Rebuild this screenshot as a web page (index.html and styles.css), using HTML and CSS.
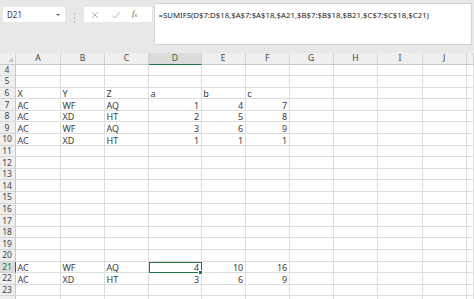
FILE: index.html
```html
<!DOCTYPE html>
<html>
<head>
<meta charset="utf-8">
<link rel="stylesheet" href="styles.css">
</head>
<body>
<div class="app">
  <div class="toolbar">
    <div class="namebox"><span class="name">D21</span><span class="caret"></span></div>
    <div class="sep"><i></i><i></i><i></i></div>
    <div class="fxbox">
      <svg class="ic" width="10" height="10" viewBox="0 0 10 10"><path d="M2 2 L8 8 M8 2 L2 8" stroke="#b4b4b4" stroke-width="1" fill="none"/></svg>
      <svg class="ic" width="10" height="10" viewBox="0 0 10 10"><path d="M1.5 5.5 L4 8 L8.5 2" stroke="#b4b4b4" stroke-width="1" fill="none"/></svg>
      <span class="fx">f<sub>x</sub></span>
    </div>
    <div class="formula">=SUMIFS(D$7:D$18,$A$7:$A$18,$A21,$B$7:$B$18,$B21,$C$7:$C$18,$C21)</div>
  </div>
  <div class="sheet">
    <div class="row head">
      <div class="corner"><span class="tri"></span></div><div>A</div><div>B</div><div>C</div><div class="hsel">D</div><div>E</div><div>F</div><div>G</div><div>H</div><div>I</div><div>J</div><div></div>
    </div>
    <div class="row"><div class="rh">4</div><div></div><div></div><div></div><div></div><div></div><div></div><div></div><div></div><div></div><div></div><div></div></div>
    <div class="row"><div class="rh">5</div><div></div><div></div><div></div><div></div><div></div><div></div><div></div><div></div><div></div><div></div><div></div></div>
    <div class="row"><div class="rh">6</div><div>X</div><div>Y</div><div>Z</div><div>a</div><div>b</div><div>c</div><div></div><div></div><div></div><div></div><div></div></div>
    <div class="row"><div class="rh">7</div><div>AC</div><div>WF</div><div>AQ</div><div class="n">1</div><div class="n">4</div><div class="n">7</div><div></div><div></div><div></div><div></div><div></div></div>
    <div class="row"><div class="rh">8</div><div>AC</div><div>XD</div><div>HT</div><div class="n">2</div><div class="n">5</div><div class="n">8</div><div></div><div></div><div></div><div></div><div></div></div>
    <div class="row"><div class="rh">9</div><div>AC</div><div>WF</div><div>AQ</div><div class="n">3</div><div class="n">6</div><div class="n">9</div><div></div><div></div><div></div><div></div><div></div></div>
    <div class="row"><div class="rh">10</div><div>AC</div><div>XD</div><div>HT</div><div class="n">1</div><div class="n">1</div><div class="n">1</div><div></div><div></div><div></div><div></div><div></div></div>
    <div class="row"><div class="rh">11</div><div></div><div></div><div></div><div></div><div></div><div></div><div></div><div></div><div></div><div></div><div></div></div>
    <div class="row"><div class="rh">12</div><div></div><div></div><div></div><div></div><div></div><div></div><div></div><div></div><div></div><div></div><div></div></div>
    <div class="row"><div class="rh">13</div><div></div><div></div><div></div><div></div><div></div><div></div><div></div><div></div><div></div><div></div><div></div></div>
    <div class="row"><div class="rh">14</div><div></div><div></div><div></div><div></div><div></div><div></div><div></div><div></div><div></div><div></div><div></div></div>
    <div class="row"><div class="rh">15</div><div></div><div></div><div></div><div></div><div></div><div></div><div></div><div></div><div></div><div></div><div></div></div>
    <div class="row"><div class="rh">16</div><div></div><div></div><div></div><div></div><div></div><div></div><div></div><div></div><div></div><div></div><div></div></div>
    <div class="row"><div class="rh">17</div><div></div><div></div><div></div><div></div><div></div><div></div><div></div><div></div><div></div><div></div><div></div></div>
    <div class="row"><div class="rh">18</div><div></div><div></div><div></div><div></div><div></div><div></div><div></div><div></div><div></div><div></div><div></div></div>
    <div class="row"><div class="rh">19</div><div></div><div></div><div></div><div></div><div></div><div></div><div></div><div></div><div></div><div></div><div></div></div>
    <div class="row"><div class="rh">20</div><div></div><div></div><div></div><div></div><div></div><div></div><div></div><div></div><div></div><div></div><div></div></div>
    <div class="row"><div class="rh rsel">21</div><div>AC</div><div>WF</div><div>AQ</div><div class="n sel">4</div><div class="n">10</div><div class="n">16</div><div></div><div></div><div></div><div></div><div></div></div>
    <div class="row"><div class="rh">22</div><div>AC</div><div>XD</div><div>HT</div><div class="n">3</div><div class="n">6</div><div class="n">9</div><div></div><div></div><div></div><div></div><div></div></div>
    <div class="row"><div class="rh">23</div><div></div><div></div><div></div><div></div><div></div><div></div><div></div><div></div><div></div><div></div><div></div></div>
    <div class="row"><div class="rh"></div><div></div><div></div><div></div><div></div><div></div><div></div><div></div><div></div><div></div><div></div><div></div></div>
  </div>
</div>
</body>
</html>
```

FILE: styles.css
```css
html, body {
  margin: 0;
  padding: 0;
  background: #ffffff;
  overflow: hidden;
}
.app {
  width: 474px;
  height: 299px;
  overflow: hidden;
  font-family: "Noto Sans", "Liberation Sans", sans-serif;
  color: #333333;
}
.toolbar {
  display: flex;
  align-items: flex-start;
  height: 53px;
  box-sizing: border-box;
  padding: 3px 2px 0 2.5px;
  background: #e8e8e8;
}
.namebox {
  position: relative;
  width: 62px;
  height: 15px;
  margin-top: 4px;
  background: #ffffff;
  display: flex;
  align-items: center;
  box-sizing: border-box;
  padding-left: 4.5px;
}
.name {
  font-size: 8px;
  color: #333;
}
.caret {
  position: absolute;
  right: 5px;
  top: 6.5px;
  width: 0;
  height: 0;
  border-left: 2px solid transparent;
  border-right: 2px solid transparent;
  border-top: 2px solid #666;
}
.sep {
  width: 19.5px;
  margin-top: 10px;
  display: flex;
  flex-direction: column;
  align-items: center;
  gap: 2.5px;
}
.sep i {
  display: block;
  width: 1px;
  height: 1.5px;
  background: #bdbdbd;
}
.fxbox {
  width: 68px;
  height: 15px;
  margin-top: 4px;
  background: #ffffff;
  display: flex;
  align-items: center;
  box-sizing: border-box;
  padding-left: 6px;
  gap: 11px;
}
.ic {
  display: block;
}
.fx {
  font-family: "Liberation Serif", serif;
  font-style: italic;
  font-size: 9px;
  color: #666;
  line-height: 9px;
}
.fx sub {
  font-size: 6px;
  vertical-align: -1px;
}
.formula {
  flex: 1;
  margin-left: 1.5px;
  height: 42px;
  box-sizing: border-box;
  background: #ffffff;
  border: 1px solid #d4d4d4;
  padding: 6px 0 0 4px;
  font-size: 7.8px;
  line-height: 10px;
  color: #222;
  white-space: nowrap;
}
.sheet {
  background: #ffffff;
}
.row {
  display: grid;
  grid-template-columns: 16px 45px 44px 44px 52.7px 44px 44px 44px 44.3px 44.7px 44px 1fr;
  height: 11.6px;
}
.row > div {
  box-sizing: border-box;
  border-right: 1px solid #dedede;
  border-bottom: 1px solid #dedede;
  font-size: 9px;
  line-height: 8px;
  padding: 0 1.5px 0 1.5px;
  display: flex;
  align-items: flex-end;
  white-space: nowrap;
  overflow: visible;
  color: #3c3c3c;
}
.row > div.n {
  justify-content: flex-end;
}
.row.head {
  height: 11.5px;
}
.row.head > div {
  background: #efefef;
  border-right: 1px solid #d2d2d2;
  border-bottom: 1px solid #c8c8c8;
  justify-content: center;
  align-items: center;
  font-size: 8.5px;
  color: #444;
  line-height: 10px;
}
.row.head > div.hsel {
  background: #dcdcdc;
  border-bottom: 1.5px solid #217346;
  color: #217346;
}
.row.head > .corner {
  position: relative;
}
.tri {
  position: absolute;
  right: 2px;
  bottom: 2px;
  width: 0;
  height: 0;
  border-left: 5px solid transparent;
  border-bottom: 5px solid #c6c6c6;
}
.row > div.rh {
  background: #efefef;
  border-right: 1px solid #c8c8c8;
  border-bottom: 1px solid #d6d6d6;
  justify-content: center;
  align-items: center;
  font-size: 8.5px;
  line-height: 10px;
  color: #444;
  padding: 0 1px 0 0;
}
.row > div.rsel {
  background: #dcdcdc;
  border-right: 1.5px solid #217346;
  color: #217346;
}
.row > div.sel {
  position: relative;
  outline: 1.5px solid #217346;
  outline-offset: -1px;
}
.row > div.sel::after {
  content: "";
  position: absolute;
  right: -2.5px;
  bottom: -2.5px;
  width: 3px;
  height: 3px;
  background: #217346;
  border: 1px solid #ffffff;
}
```
